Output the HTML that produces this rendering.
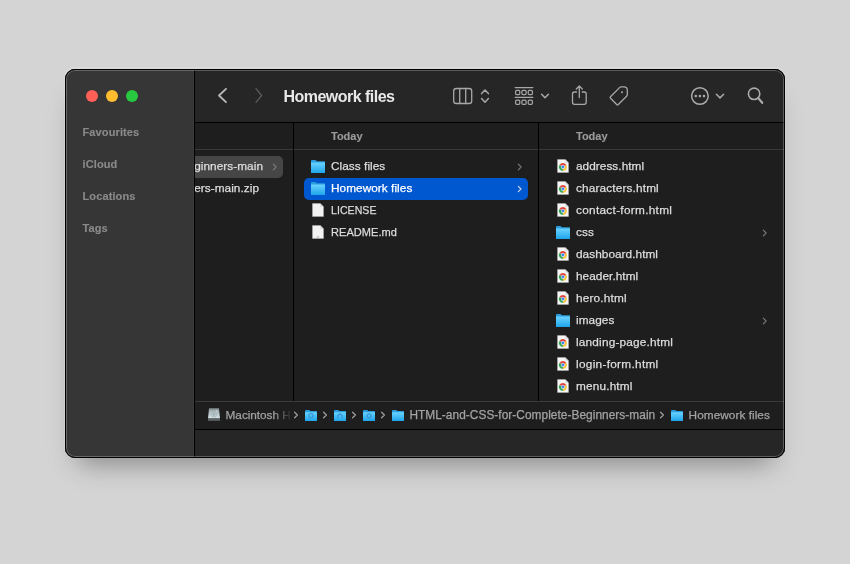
<!DOCTYPE html>
<html><head><meta charset="utf-8">
<style>
*{margin:0;padding:0;box-sizing:border-box}
html,body{width:850px;height:564px;overflow:hidden;background:#d4d4d4;font-family:"Liberation Sans",sans-serif}
.a{position:absolute}
#shadow{position:absolute;left:65px;top:69px;width:720px;height:389px;border-radius:10px;background:#222;
 box-shadow:0 -1px 0 1px rgba(255,255,255,0.15),0 18px 26px -13px rgba(0,0,0,0.38)}
#clip{will-change:transform;position:absolute;left:0;top:0;width:850px;height:564px;clip-path:inset(69px 65px 106px 65px round 10px)}
#frame{position:absolute;left:65px;top:69px;width:720px;height:389px;border-radius:10px;border:1px solid #000;
 box-shadow:inset 0 0 0 1px rgba(255,255,255,0.25)}
.t{position:absolute;white-space:nowrap;line-height:1}
.sl{font-size:11px;font-weight:bold;color:#8a8a8a;left:82.5px;margin-top:-1px;letter-spacing:0.12px;-webkit-text-stroke:0.15px currentColor}
.hdr{font-size:11px;font-weight:bold;color:#9a9a9a;margin-top:-1px;-webkit-text-stroke:0.15px currentColor}
.fn{font-size:11.8px;color:#dedede;margin-top:1px;-webkit-text-stroke:0.25px currentColor;letter-spacing:0.05px}
.dot{position:absolute;width:12px;height:12px;border-radius:50%}
</style></head><body>
<svg width="0" height="0" style="position:absolute">
 <defs>
  <linearGradient id="fg" x1="0" y1="0" x2="0" y2="1"><stop offset="0" stop-color="#6ad3ff"/><stop offset="1" stop-color="#1ea4ea"/></linearGradient>
  <linearGradient id="hd" x1="0" y1="0" x2="0" y2="1"><stop offset="0" stop-color="#939ea2"/><stop offset="0.5" stop-color="#b9c6ca"/><stop offset="1" stop-color="#d8e5e9"/></linearGradient>
  <symbol id="doc" viewBox="0 0 14 16">
   <path d="M1.5 1.5 H9.3 L12.5 4.7 V14.5 H1.5 Z" fill="#f5f5f5" stroke="#bdbdbd" stroke-width="0.4"/>
   <path d="M9.3 1.5 V4.7 H12.5 Z" fill="#d9d9d9"/>
   <path d="M6.9 9 L3.44 7 A4 4 0 0 1 10.36 7 Z" fill="#e0483e"/>
   <path d="M6.9 9 L10.36 7 A4 4 0 0 1 6.9 13 Z" fill="#f7c33a"/>
   <path d="M6.9 9 L6.9 13 A4 4 0 0 1 3.44 7 Z" fill="#35a853"/>
   <circle cx="6.9" cy="9" r="1.9" fill="#fff"/>
   <circle cx="6.9" cy="9" r="1.45" fill="#3f86f0"/>
  </symbol>
  <symbol id="fold" viewBox="0 0 16 15">
   <path d="M1 2 Q1 1 2 1 H5.6 L6.8 2.3 H14.4 Q15 2.3 15 2.9 V13.5 Q15 14 14.5 14 H1.5 Q1 14 1 13.5 Z" fill="#2a9ddc"/>
   <path d="M1 3.6 H15 V13.5 Q15 14 14.5 14 H1.5 Q1 14 1 13.5 Z" fill="url(#fg)"/>
  </symbol>
  <symbol id="bfold" viewBox="0 0 12 11">
   <path d="M0 1 Q0 0 1 0 H4.3 L5.3 1 H11.4 Q12 1 12 1.6 V10.5 Q12 11 11.5 11 H0.5 Q0 11 0 10.5 Z" fill="#2a9ddc"/>
   <path d="M0 2.2 H12 V10.5 Q12 11 11.5 11 H0.5 Q0 11 0 10.5 Z" fill="url(#fg)"/>
  </symbol>
  <symbol id="bchev" viewBox="0 0 6 8">
   <path d="M1.6 1.2 L4.4 4 L1.6 6.8" fill="none" stroke="#9c9c9c" stroke-width="1.3" stroke-linecap="round" stroke-linejoin="round"/>
  </symbol>
  <symbol id="chevw" viewBox="0 0 7 9">
   <path d="M2.3 1.3 L5 4 L2.3 6.7" fill="none" stroke="#d2ddf3" stroke-width="1.1" stroke-linecap="round" stroke-linejoin="round"/>
  </symbol>
  <symbol id="plain" viewBox="0 0 14 16">
   <path d="M1.5 1.5 H9.3 L12.5 4.7 V14.5 H1.5 Z" fill="#f2f2f2" stroke="#bdbdbd" stroke-width="0.4"/>
   <path d="M9.3 1.5 V4.7 H12.5 Z" fill="#d5d5d5"/>
  </symbol>
  <symbol id="chev" viewBox="0 0 7 9">
   <path d="M2.3 1.2 L5.1 4 L2.3 6.8" fill="none" stroke="#7b7b7b" stroke-width="1.1" stroke-linecap="round" stroke-linejoin="round"/>
  </symbol>
 </defs>
</svg>
<div id="shadow"></div>
<div id="clip">
 <div class="a" style="left:65px;top:69px;width:129px;height:389px;background:#363636"></div>
 <div class="a" style="left:193px;top:69px;width:1px;height:389px;background:#3b3b3b"></div>
 <div class="a" style="left:194px;top:69px;width:1px;height:389px;background:#000"></div>
 <div class="a" style="left:195px;top:69px;width:590px;height:53px;background:#262626"></div>
 <div class="a" style="left:195px;top:122px;width:590px;height:1px;background:#000"></div>
 <div class="a" style="left:195px;top:123px;width:590px;height:278px;background:#1e1e1e"></div>
 <div class="a" style="left:195px;top:149px;width:590px;height:1px;background:#3a3a3a"></div>
 <div class="a" style="left:293px;top:123px;width:1px;height:278px;background:#000"></div>
 <div class="a" style="left:538px;top:123px;width:1px;height:278px;background:#000"></div>
 <div class="a" style="left:195px;top:401px;width:590px;height:1px;background:#3a3a3a"></div>
 <div class="a" style="left:195px;top:402px;width:590px;height:27px;background:#1e1e1e"></div>
 <div class="a" style="left:195px;top:429px;width:590px;height:1px;background:#000"></div>
 <div class="a" style="left:195px;top:430px;width:590px;height:28px;background:#262626"></div>

 <div class="dot" style="left:86px;top:90px;background:#fe5f57"></div>
 <div class="dot" style="left:106px;top:90px;background:#febc2e"></div>
 <div class="dot" style="left:126px;top:90px;background:#28c840"></div>
 <div class="t sl" style="top:128px">Favourites</div>
 <div class="t sl" style="top:160px">iCloud</div>
 <div class="t sl" style="top:192px">Locations</div>
 <div class="t sl" style="top:224px">Tags</div>


 <svg class="a" style="left:195px;top:69px" width="590" height="53" viewBox="195 69 590 53">
  <g fill="none" stroke-linecap="round" stroke-linejoin="round">
   <path d="M226 88.8 L219 95.5 L226 102.2" stroke="#b8b8b8" stroke-width="1.8"/>
   <path d="M256 88.6 L261.6 95.5 L256 102.4" stroke="#5c5c5c" stroke-width="1.3"/>
   <rect x="453.7" y="88.5" width="18" height="15" rx="2.6" stroke="#a8a8a8" stroke-width="1.3"/>
   <path d="M459.7 88.5 V103.5 M465.7 88.5 V103.5" stroke="#a8a8a8" stroke-width="1.3"/>
   <path d="M481.6 93.6 L485 90 L488.4 93.6 M481.6 98.6 L485 102.2 L488.4 98.6" stroke="#a8a8a8" stroke-width="1.5"/>
   <path d="M515.2 87.6 H532.8 M515.2 97.4 H532.8" stroke="#a8a8a8" stroke-width="1.3"/>
   <rect x="515.6" y="90.4" width="4.2" height="4.2" rx="1.2" stroke="#a8a8a8" stroke-width="1.2"/>
   <rect x="521.9" y="90.4" width="4.2" height="4.2" rx="1.2" stroke="#a8a8a8" stroke-width="1.2"/>
   <rect x="528.2" y="90.4" width="4.2" height="4.2" rx="1.2" stroke="#a8a8a8" stroke-width="1.2"/>
   <rect x="515.6" y="100.2" width="4.2" height="4.2" rx="1.2" stroke="#a8a8a8" stroke-width="1.2"/>
   <rect x="521.9" y="100.2" width="4.2" height="4.2" rx="1.2" stroke="#a8a8a8" stroke-width="1.2"/>
   <rect x="528.2" y="100.2" width="4.2" height="4.2" rx="1.2" stroke="#a8a8a8" stroke-width="1.2"/>
   <path d="M541.6 94.3 L545 97.8 L548.4 94.3" stroke="#a8a8a8" stroke-width="1.5"/>
   <path d="M576.5 92 H574.5 Q572.5 92 572.5 94 V102.3 Q572.5 104.3 574.5 104.3 H584.2 Q586.2 104.3 586.2 102.3 V94 Q586.2 92 584.2 92 H582.2" stroke="#a8a8a8" stroke-width="1.3"/>
   <path d="M579.3 97.6 V86 M576.3 89 L579.3 86 L582.3 89" stroke="#a8a8a8" stroke-width="1.3"/>
   <path d="M621 86.8 H624 Q627.3 86.8 627.3 90 V94.5 Q627.3 95.5 626.6 96.2 L618.3 104.5 Q617.5 105.3 616.7 104.5 L610.5 98.3 Q609.7 97.5 610.5 96.7 L618.8 88.4 Q619.9 86.8 621 86.8 Z" stroke="#a8a8a8" stroke-width="1.3"/>
   <circle cx="699.9" cy="96" r="8.3" stroke="#acacac" stroke-width="1.5"/>
   <path d="M716.4 94.3 L720 97.9 L723.6 94.3" stroke="#a8a8a8" stroke-width="1.5"/>
   <circle cx="754.1" cy="93.8" r="5.7" stroke="#acacac" stroke-width="1.6"/>
   <path d="M758.3 98.1 L762.2 102.8" stroke="#acacac" stroke-width="2.2"/>
  </g>
  <g fill="#a8a8a8">
   <circle cx="622" cy="92.2" r="1"/>
   <circle cx="695.8" cy="96.1" r="1.3"/>
   <circle cx="699.9" cy="96.1" r="1.3"/>
   <circle cx="704" cy="96.1" r="1.3"/>
  </g>
 </svg>
 <div class="t" style="left:283.5px;top:88.6px;font-size:16px;letter-spacing:-0.52px;font-weight:bold;color:#e8e8e8">Homework files</div>

 <div class="t hdr" style="left:331px;top:132px">Today</div>
 <div class="t hdr" style="left:576px;top:132px">Today</div>

 <!-- column 1 -->
 <div class="a" style="left:195px;top:123px;width:98px;height:278px;overflow:hidden">
  <div class="a" style="left:-20px;top:33px;width:108px;height:22px;border-radius:5px;background:#464646"></div>
  <div class="t fn" style="right:30px;top:37px">HTML-and-CSS-for-Complete-Beginners-main</div>
  <svg class="a" style="left:76px;top:40px" width="7" height="9"><use href="#chev"/></svg>
  <div class="t fn" style="right:34px;top:59px">HTML-and-CSS-for-Complete-Beginners-main.zip</div>
 </div>
 <!-- column 2 -->
 <div class="a" style="left:304px;top:178px;width:224px;height:22px;border-radius:5px;background:#0058d0"></div>
 <svg class="a" style="left:310px;top:159px" width="16" height="15"><use href="#fold"/></svg>
 <div class="t fn" style="left:331px;top:160px">Class files</div>
 <svg class="a" style="left:516px;top:163px" width="7" height="9"><use href="#chev"/></svg>
 <svg class="a" style="left:310px;top:181px" width="16" height="15"><use href="#fold"/></svg>
 <div class="t fn" style="left:331px;top:182px;color:#fff">Homework files</div>
 <svg class="a" style="left:516px;top:185px" width="7" height="9"><use href="#chevw"/></svg>
 <svg class="a" style="left:311px;top:202px" width="14" height="16"><use href="#plain"/></svg>
 <div class="t fn" style="left:331px;top:204px;transform:scaleX(0.895);transform-origin:0 0">LICENSE</div>
 <svg class="a" style="left:311px;top:224px" width="14" height="16"><use href="#plain"/><path d="M5.8 12.6 L7 13.3 L8.2 12.6" fill="none" stroke="#8a8a8a" stroke-width="0.7"/></svg>
 <div class="t fn" style="left:331px;top:226px;transform:scaleX(0.935);transform-origin:0 0">README.md</div>
 <!-- column 3 -->
<svg class="a" style="left:556px;top:158px" width="14" height="16"><use href="#doc"/></svg>
<div class="t fn" style="left:576px;top:160px">address.html</div>
<svg class="a" style="left:556px;top:180px" width="14" height="16"><use href="#doc"/></svg>
<div class="t fn" style="left:576px;top:182px;letter-spacing:0.15px">characters.html</div>
<svg class="a" style="left:556px;top:202px" width="14" height="16"><use href="#doc"/></svg>
<div class="t fn" style="left:576px;top:204px;letter-spacing:0.3px">contact-form.html</div>
<svg class="a" style="left:555px;top:225px" width="16" height="15"><use href="#fold"/></svg>
<svg class="a" style="left:761px;top:229px" width="7" height="9"><use href="#chev"/></svg>
<div class="t fn" style="left:576px;top:226px">css</div>
<svg class="a" style="left:556px;top:246px" width="14" height="16"><use href="#doc"/></svg>
<div class="t fn" style="left:576px;top:248px">dashboard.html</div>
<svg class="a" style="left:556px;top:268px" width="14" height="16"><use href="#doc"/></svg>
<div class="t fn" style="left:576px;top:270px">header.html</div>
<svg class="a" style="left:556px;top:290px" width="14" height="16"><use href="#doc"/></svg>
<div class="t fn" style="left:576px;top:292px;letter-spacing:0.17px">hero.html</div>
<svg class="a" style="left:555px;top:313px" width="16" height="15"><use href="#fold"/></svg>
<svg class="a" style="left:761px;top:317px" width="7" height="9"><use href="#chev"/></svg>
<div class="t fn" style="left:576px;top:314px">images</div>
<svg class="a" style="left:556px;top:334px" width="14" height="16"><use href="#doc"/></svg>
<div class="t fn" style="left:576px;top:336px;letter-spacing:0.2px">landing-page.html</div>
<svg class="a" style="left:556px;top:356px" width="14" height="16"><use href="#doc"/></svg>
<div class="t fn" style="left:576px;top:358px;letter-spacing:0.3px">login-form.html</div>
<svg class="a" style="left:556px;top:378px" width="14" height="16"><use href="#doc"/></svg>
<div class="t fn" style="left:576px;top:380px;letter-spacing:0.17px">menu.html</div>

 <!-- path bar -->
 <svg class="a" style="left:208px;top:408px" width="12" height="13" viewBox="0 0 12 13">
  <path d="M1 0.6 H11 L12 10.6 H0 Z" fill="url(#hd)"/>
  <path d="M1 0.6 H11 L11.1 1.6 H0.9 Z" fill="#7c8588"/>
  <rect x="0" y="10.4" width="12" height="2.4" fill="#5d6264"/>
  <circle cx="6" cy="6.6" r="2.5" fill="none" stroke="#a8b6ba" stroke-width="1"/>
  <circle cx="6" cy="6.6" r="0.9" fill="#8a979b"/>
  <circle cx="8.6" cy="2.8" r="0.6" fill="#e0e8ea"/>
 </svg>
 <div class="t fn" style="left:225.6px;top:409px;color:#a3a3a3;width:64.5px;letter-spacing:-0.05px;overflow:hidden;-webkit-mask-image:linear-gradient(90deg,#000 0,#000 48px,rgba(0,0,0,0.1) 64.5px)">Macintosh HD</div>
 <svg class="a" style="left:292.5px;top:411px" width="6" height="8"><use href="#bchev"/></svg>
 <svg class="a" style="left:305px;top:410px" width="12" height="11"><use href="#bfold"/></svg>
 <svg class="a" style="left:305px;top:410px" width="12" height="11" viewBox="0 0 12 11"><circle cx="6" cy="5.6" r="2.1" fill="none" stroke="#3a93d0" stroke-width="1.1"/></svg>
 <svg class="a" style="left:321.5px;top:411px" width="6" height="8"><use href="#bchev"/></svg>
 <svg class="a" style="left:334px;top:410px" width="12" height="11"><use href="#bfold"/></svg>
 <svg class="a" style="left:334px;top:410px" width="12" height="11" viewBox="0 0 12 11"><path d="M3.8 8.3 V5.6 L6 3.8 L8.2 5.6 V8.3" fill="none" stroke="#3a93d0" stroke-width="1.1"/></svg>
 <svg class="a" style="left:350.5px;top:411px" width="6" height="8"><use href="#bchev"/></svg>
 <svg class="a" style="left:363px;top:410px" width="12" height="11"><use href="#bfold"/></svg>
 <svg class="a" style="left:363px;top:410px" width="12" height="11" viewBox="0 0 12 11"><circle cx="6" cy="5.8" r="2" fill="none" stroke="#3a93d0" stroke-width="1.2"/></svg>
 <svg class="a" style="left:379.5px;top:411px" width="6" height="8"><use href="#bchev"/></svg>
 <svg class="a" style="left:392px;top:410px" width="12" height="11"><use href="#bfold"/></svg>
 <div class="t fn" style="left:409.4px;top:409px;color:#a3a3a3;font-size:11.875px">HTML-and-CSS-for-Complete-Beginners-main</div>
 <svg class="a" style="left:658.5px;top:411px" width="6" height="8"><use href="#bchev"/></svg>
 <svg class="a" style="left:671px;top:410px" width="12" height="11"><use href="#bfold"/></svg>
 <div class="t fn" style="left:688.6px;top:409px;color:#a3a3a3">Homework files</div>
</div>
<div id="frame"></div>
</body></html>
